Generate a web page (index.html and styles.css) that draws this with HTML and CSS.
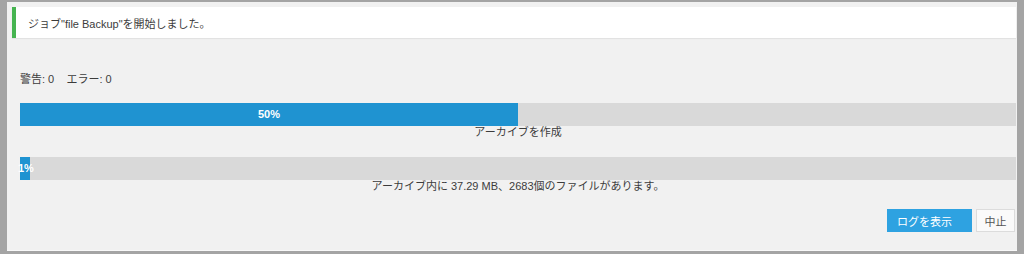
FILE: index.html
```html
<!DOCTYPE html>
<html lang="ja">
<head>
<meta charset="utf-8">
<link rel="stylesheet" href="styles.css">
</head>
<body>
<div class="frame">
  <div class="notice"><span>ジョブ"file Backup"を開始しました。</span></div>
  <div class="content">
    <div class="stats">警告: 0&nbsp;&nbsp;&nbsp; エラー: 0</div>
    <div class="bar bar-first">
      <div class="fill" style="width:50%">50%</div>
    </div>
    <div class="label">アーカイブを作成</div>
    <div class="bar bar-second">
      <div class="fill small" style="width:1%">1%</div>
    </div>
    <div class="label">アーカイブ内に 37.29 MB、2683個のファイルがあります。</div>
    <div class="actions">
      <button class="btn btn-primary">ログを表示</button>
      <button class="btn btn-secondary">中止</button>
    </div>
  </div>
</div>
</body>
</html>
```
FILE: styles.css
```css
html, body {
  margin: 0;
  padding: 0;
}
body {
  background: #a4a4a4;
  width: 1024px;
  height: 254px;
  overflow: hidden;
  font-family: "Liberation Sans", "Noto Sans CJK JP", sans-serif;
  font-size: 11px;
  color: #3c3c3c;
}
.frame {
  margin: 2px 7px 0 7px;
  width: 1010px;
  height: 249px;
  background: #f1f1f1;
  border-bottom: 1px solid #f8f8f8;
  padding-top: 5px;
  box-sizing: border-box;
}
.notice {
  margin: 0 1px 0 5px;
  height: 31px;
  background: #fff;
  border-left: 4px solid #46b450;
  box-shadow: 0 1px 1px rgba(0,0,0,0.06);
  display: flex;
  align-items: center;
  padding-left: 12px;
}
.content {
  padding: 0 1px 0 13px;
}
.stats {
  margin-top: 33px;
  line-height: 16px;
  height: 16px;
}
.bar {
  height: 23px;
  background: #d9d9d9;
  position: relative;
  display: flex;
}
.bar-first { margin-top: 16px; }
.bar-second { margin-top: 18px; }
.fill {
  background: #1f93d1;
  color: #fff;
  font-weight: bold;
  font-size: 11px;
  line-height: 23px;
  text-align: center;
  white-space: nowrap;
  height: 23px;
}
.fill.small {
  text-align: left;
  text-indent: -2px;
  overflow: visible;
}
.label {
  text-align: center;
  line-height: 13px;
  height: 13px;
}
.actions {
  margin-top: 16px;
  display: flex;
  justify-content: flex-end;
  gap: 4px;
  padding-right: 1px;
}
.btn {
  font-family: "Liberation Sans", "Noto Sans CJK JP", sans-serif;
  font-size: 11px;
  height: 23px;
  margin: 0;
  border-radius: 0;
  cursor: pointer;
}
.btn-primary {
  width: 85px;
  background: #2ea2e1;
  color: #fff;
  border: 1px solid #2ea2e1;
  text-align: left;
  padding: 0 0 0 9px;
}
.btn-secondary {
  width: 39px;
  background: #fafafa;
  color: #555;
  border: 1px solid #dcdcdc;
  padding: 0;
  text-align: center;
}
```
